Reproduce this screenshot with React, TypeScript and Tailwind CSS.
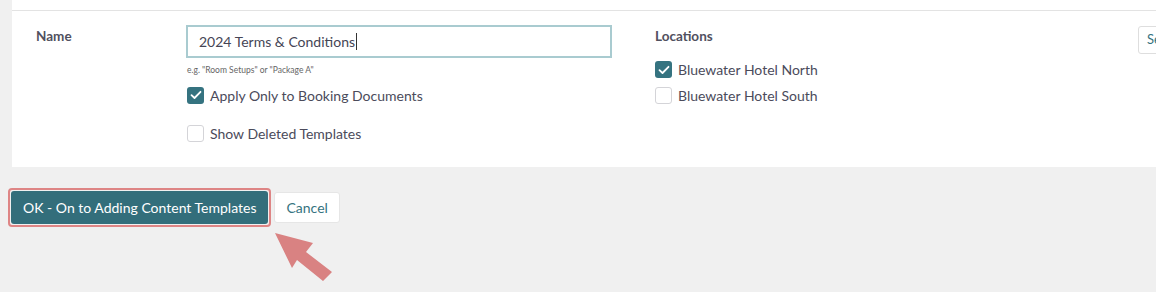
import React from "react";

function Check({ checked }: { checked: boolean }) {
  return checked ? (
    <span className="flex h-[17px] w-[17px] shrink-0 items-center justify-center rounded-[3px] bg-[#357380]">
      <svg width="12" height="10" viewBox="0 0 12 10" fill="none">
        <path d="M1.5 5.2 L4.5 8 L10.5 1.8" stroke="white" strokeWidth="1.8" strokeLinecap="round" strokeLinejoin="round" />
      </svg>
    </span>
  ) : (
    <span className="h-[17px] w-[17px] shrink-0 rounded-[3px] border border-[#d4d4d8] bg-white" />
  );
}

export default function App() {
  return (
    <div className="relative h-[292px] w-[1156px] overflow-hidden bg-[#f0f0f0] text-[#4b4b5b]" style={{ fontFamily: "Lato, 'Open Sans', sans-serif" }}>
      <div className="ml-[12px] h-[167px] overflow-hidden bg-white">
        <div className="h-[11px] border-b border-[#e3e3e3]" />
        <div className="flex pt-[14px]">
          <div className="w-[174px] shrink-0 pl-[24px] pt-[1px] text-[13.5px] font-bold text-[#50505e]">Name</div>
          <div className="w-[469px] shrink-0">
            <div className="flex h-[33px] w-[426px] items-center border-2 border-[#a9cbd0] pl-[11px] text-[14px] text-[#454555]">
              2024 Terms &amp; Conditions<span className="ml-[1px] h-[17px] w-[1px] bg-[#333]" />
            </div>
            <div className="mt-[6px] pl-[1px] text-[8.5px] text-[#666]">e.g. "Room Setups" or "Package A"</div>
            <label className="mt-[8px] flex items-center gap-[6px] pl-[1px] text-[14px]">
              <Check checked />
              <span>Apply Only to Booking Documents</span>
            </label>
            <label className="mt-[17px] flex items-center gap-[6px] pl-[1px] text-[14px]">
              <Check checked={false} />
              <span>Show Deleted Templates</span>
            </label>
          </div>
          <div className="w-[483px] shrink-0">
            <div className="pt-[1px] text-[13.5px] font-bold text-[#50505e]">Locations</div>
            <label className="mt-[13px] flex items-center gap-[6px] text-[14px]">
              <Check checked />
              <span>Bluewater Hotel North</span>
            </label>
            <label className="mt-[5px] flex items-center gap-[6px] text-[14px]">
              <Check checked={false} />
              <span>Bluewater Hotel South</span>
            </label>
          </div>
          <div className="shrink-0 pt-[1px]">
            <div className="flex h-[28px] w-[80px] items-center rounded-[3px] border border-[#dedede] bg-white pl-[8px] text-[13px] text-[#357380]">Select All</div>
          </div>
        </div>
      </div>
      <div className="mt-[21px] flex items-center pl-[8px]">
        <div className="rounded-[4px] border-2 border-[#de8585] p-[1px]">
          <button className="h-[33px] rounded-[3px] bg-[#336e7b] px-[12px] text-[14px] text-white">OK - On to Adding Content Templates</button>
        </div>
        <button className="ml-[3px] h-[31px] rounded-[3px] border border-[#e6e6e6] bg-white px-[11px] text-[14px] text-[#357380]">Cancel</button>
      </div>
      <svg className="absolute left-0 top-0" width="1156" height="292" viewBox="0 0 1156 292">
        <polygon points="275,233 313,243 306,252 332,272 323,281 297,260 292,268" fill="#d98282" />
      </svg>
    </div>
  );
}
